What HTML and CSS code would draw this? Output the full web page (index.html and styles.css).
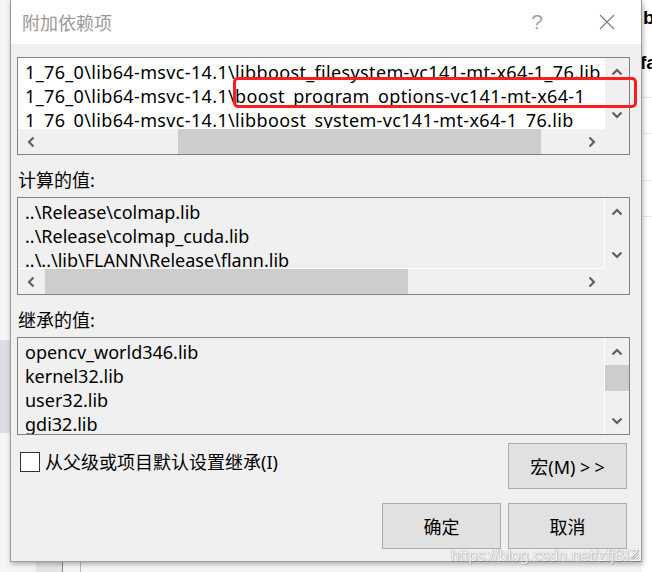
FILE: index.html
```html
<!DOCTYPE html>
<html lang="zh-CN">
<head>
    <meta charset="UTF-8">
    <meta name="viewport" content="width=device-width, initial-scale=1.0">
    <title>附加依赖项</title>
    <link rel="stylesheet" href="styles.css">
</head>
<body>
<div class="screen">
    <!-- lo que queda detrás del diálogo -->
    <div class="behind-left"><div class="band"></div></div>
    <div class="behind-bottom"><div class="tab"></div><div class="gap"></div></div>
    <div class="behind-right">
        <div class="peek peek-b">b</div>
        <div class="peek peek-fa">fa</div>
        <div class="line l1"></div>
        <div class="line l2"></div>
        <div class="line l3"></div>
        <div class="line l4"></div>
    </div>

    <div class="dialog">
        <div class="titlebar">
            <span class="title">附加依赖项</span>
            <span class="help">?</span>
            <svg class="close" width="16" height="16" viewBox="0 0 16 16">
                <path d="M1 1 L15 15 M15 1 L1 15" stroke="#7a7a7a" stroke-width="1.1" fill="none"/>
            </svg>
        </div>

        <div class="content">
            <div class="listbox">
                <div class="list-content editable">
                    <div class="row">1_76_0\lib64-msvc-14.1\libboost_filesystem-vc141-mt-x64-1_76.lib</div>
                    <div class="row">1_76_0\lib64-msvc-14.1\boost_program_options-vc141-mt-x64-1</div>
                    <div class="row">1_76_0\lib64-msvc-14.1\libboost_system-vc141-mt-x64-1_76.lib</div>
                </div>
                <div class="vscroll">
                    <div class="arrow-btn"><svg width="12" height="8" viewBox="0 0 12 8"><polyline points="1.5,6.5 6,2 10.5,6.5" class="chev"/></svg></div>
                    <div class="arrow-btn"><svg width="12" height="8" viewBox="0 0 12 8"><polyline points="1.5,1.5 6,6 10.5,1.5" class="chev"/></svg></div>
                </div>
                <div class="hscroll">
                    <div class="arrow-btn"><svg width="8" height="12" viewBox="0 0 8 12"><polyline points="6.5,1.5 2,6 6.5,10.5" class="chev"/></svg></div>
                    <div class="track"><div class="hthumb" style="margin-left: 135px"></div></div>
                    <div class="arrow-btn"><svg width="8" height="12" viewBox="0 0 8 12"><polyline points="1.5,1.5 6,6 1.5,10.5" class="chev"/></svg></div>
                </div>
                <div class="corner"></div>
                <div class="highlight"></div>
            </div>

            <div class="label">计算的值:</div>
            <div class="listbox">
                <div class="list-content">
                    <div class="row">..\Release\colmap.lib</div>
                    <div class="row">..\Release\colmap_cuda.lib</div>
                    <div class="row">..\..\lib\FLANN\Release\flann.lib</div>
                </div>
                <div class="vscroll">
                    <div class="arrow-btn"><svg width="12" height="8" viewBox="0 0 12 8"><polyline points="1.5,6.5 6,2 10.5,6.5" class="chev"/></svg></div>
                    <div class="arrow-btn"><svg width="12" height="8" viewBox="0 0 12 8"><polyline points="1.5,1.5 6,6 10.5,1.5" class="chev"/></svg></div>
                </div>
                <div class="hscroll">
                    <div class="arrow-btn"><svg width="8" height="12" viewBox="0 0 8 12"><polyline points="6.5,1.5 2,6 6.5,10.5" class="chev"/></svg></div>
                    <div class="track"><div class="hthumb" style="margin-left: 2px"></div></div>
                    <div class="arrow-btn"><svg width="8" height="12" viewBox="0 0 8 12"><polyline points="1.5,1.5 6,6 1.5,10.5" class="chev"/></svg></div>
                </div>
                <div class="corner"></div>
            </div>

            <div class="label">继承的值:</div>
            <div class="listbox no-h">
                <div class="list-content">
                    <div class="row">opencv_world346.lib</div>
                    <div class="row">kernel32.lib</div>
                    <div class="row">user32.lib</div>
                    <div class="row">gdi32.lib</div>
                </div>
                <div class="vscroll">
                    <div class="arrow-btn"><svg width="12" height="8" viewBox="0 0 12 8"><polyline points="1.5,6.5 6,2 10.5,6.5" class="chev"/></svg></div>
                    <div class="vthumb"></div>
                    <div class="arrow-btn"><svg width="12" height="8" viewBox="0 0 12 8"><polyline points="1.5,1.5 6,6 10.5,1.5" class="chev"/></svg></div>
                </div>
            </div>

            <div class="footer">
                <div class="footer-row">
                    <label class="check"><span class="box"></span>从父级或项目默认设置继承(I)</label>
                    <button class="btn btn-macro">宏(M) <span class="chevrons">&gt;&gt;</span></button>
                </div>
                <div class="footer-actions">
                    <button class="btn">确定</button>
                    <button class="btn">取消</button>
                </div>
            </div>
        </div>

        <div class="watermark">https://blog.csdn.net/zfjBIZ</div>
        <svg class="grip" width="11" height="11" viewBox="0 0 11 11">
            <path d="M10 2 L2 10 M10 5 L5 10 M10 8 L8 10" stroke="#b5b5b5" stroke-width="1"/>
        </svg>
    </div>
</div>
</body>
</html>
```

FILE: styles.css
```css
* {
    box-sizing: border-box;
}
html, body {
    margin: 0;
}
body {
    width: 652px;
    height: 572px;
    overflow: hidden;
    background: #fff;
    color: #000;
    font-family: "Noto Sans", "Noto Sans CJK SC", sans-serif;
}
.screen {
    display: grid;
    grid-template-columns: 10px 632px 10px;
    grid-template-rows: 562px 10px;
    width: 652px;
    height: 572px;
}

/* fondo */
.behind-left {
    grid-column: 1;
    grid-row: 1;
    background: #f6f6f6;
}
.behind-left .band {
    margin-top: 340px;
    height: 93px;
    background: #dcdde5;
}
.behind-bottom {
    grid-column: 1 / 3;
    grid-row: 2;
    background: #f5f5f5;
    display: flex;
}
.behind-bottom .tab {
    margin-left: 36px;
    width: 27px;
    background: #e4e4e4;
    border-right: 1px solid #8a8a8a;
}
.behind-bottom .gap {
    width: 18px;
    border-right: 1px solid #b8b8b8;
}
.behind-right {
    grid-column: 3;
    grid-row: 1 / 3;
    background: #fff;
    display: flex;
    flex-direction: column;
}
.peek {
    font-family: "Liberation Sans", sans-serif;
    font-weight: bold;
    font-size: 19px;
    line-height: 24px;
    white-space: nowrap;
}
.peek-b {
    margin: 6px 0 0 1px;
}
.peek-fa {
    margin: 21px 0 0 -2px;
}
.line {
    border-top: 1px solid #e6e8ef;
}
.l1 { margin-top: 22px; }
.l2 { margin-top: 35px; }
.l3 { margin-top: 46px; }
.l4 { margin-top: 35px; }

/* diálogo */
.dialog {
    grid-column: 2;
    grid-row: 1;
    position: relative;
    background: #f0f0f0;
    border: 1px solid #9c9c9c;
    border-top: none;
    box-shadow: 1px 2px 5px rgba(0, 0, 0, 0.3);
    display: flex;
    flex-direction: column;
}
.titlebar {
    height: 44px;
    background: #fff;
    display: flex;
    align-items: center;
    padding-left: 11px;
}
.title {
    font-size: 18px;
    color: #9a9a9a;
}
.help {
    margin-left: auto;
    font-family: "Liberation Sans", sans-serif;
    font-size: 21px;
    color: #a3a3a3;
    margin-right: 56px;
}
.close {
    margin-right: 26px;
}
.content {
    padding: 13px 0 12px 6px;
}
.label {
    font-size: 18px;
    line-height: 24px;
    padding-top: 13px;
    margin-bottom: 5px;
    padding-left: 1px;
}

/* listas */
.listbox {
    position: relative;
    width: 613px;
    height: 98px;
    border: 1px solid #828282;
    background: #f0f0f0;
    display: grid;
    grid-template-columns: 1fr 25px;
    grid-template-rows: 1fr 26px;
}
.listbox.no-h {
    grid-template-rows: 1fr;
}
.list-content {
    overflow: hidden;
    padding: 2px 0 0 7px;
}
.list-content.editable {
    background: #fff;
}
.row {
    height: 24px;
    line-height: 24px;
    font-size: 18px;
    white-space: nowrap;
}
.editable .row {
    letter-spacing: 0.35px;
}
.vscroll {
    border-left: 1px solid #fff;
    display: flex;
    flex-direction: column;
}
.vscroll .arrow-btn {
    height: 27px;
}
.vscroll .arrow-btn:last-child {
    margin-top: auto;
}
.vthumb {
    height: 26px;
    background: #cdcdcd;
}
.hscroll {
    border-top: 1px solid #fff;
    display: flex;
}
.hscroll .arrow-btn {
    width: 25px;
}
.arrow-btn {
    display: flex;
    align-items: center;
    justify-content: center;
}
.chev {
    fill: none;
    stroke: #606060;
    stroke-width: 2.2;
}
.track {
    flex: 1;
    display: flex;
}
.hthumb {
    width: 363px;
    background: #cdcdcd;
}
.highlight {
    position: absolute;
    left: 215px;
    top: 19px;
    width: 404px;
    height: 31px;
    border: 3.5px solid #fb1e1e;
    border-radius: 5px;
}

/* pie */
.footer {
    width: 613px;
    margin-top: 8px;
    padding-right: 3px;
    display: flex;
    flex-direction: column;
    gap: 14px;
}
.footer-row {
    display: flex;
    align-items: flex-start;
}
.check {
    display: flex;
    align-items: center;
    gap: 5px;
    margin: 7px 0 0 3px;
    font-size: 18px;
    line-height: 24px;
}
.box {
    width: 20px;
    height: 20px;
    background: #fff;
    border: 1px solid #333;
}
.btn {
    width: 119px;
    height: 46px;
    background: #e1e1e1;
    border: 1px solid #adadad;
    font-family: inherit;
    font-size: 18px;
    color: #000;
    padding: 0;
}
.btn-macro {
    margin-left: auto;
}
.chevrons {
    letter-spacing: 4px;
    margin-right: -4px;
}
.footer-actions {
    display: flex;
    justify-content: flex-end;
    gap: 7px;
}
.watermark {
    position: absolute;
    right: 2px;
    bottom: -4px;
    font-family: "Liberation Sans", sans-serif;
    font-size: 16px;
    color: rgba(255, 255, 255, 0.92);
    text-shadow: 0 0 1px rgba(0, 0, 0, 0.4), 1px 1px 1px rgba(0, 0, 0, 0.15);
    white-space: nowrap;
}
.grip {
    position: absolute;
    right: 1px;
    bottom: 1px;
}
```
